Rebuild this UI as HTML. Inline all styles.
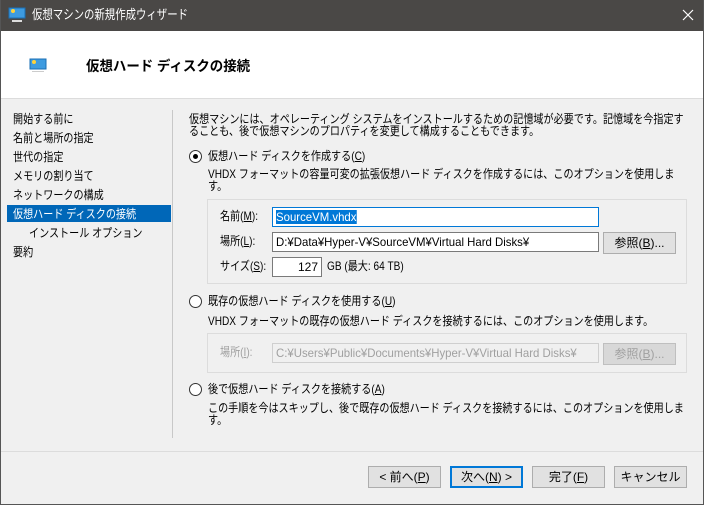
<!DOCTYPE html>
<html><head><meta charset="utf-8"><style>
*{margin:0;padding:0;box-sizing:border-box}
body{width:704px;height:505px;background:#f0f0f0;font-family:"Liberation Sans","Noto Sans CJK JP",sans-serif;font-size:12px;color:#000;position:relative;overflow:hidden}
.a{position:absolute;white-space:nowrap;line-height:14px;transform:scaleX(0.84);transform-origin:0 0}
.tb{position:absolute;left:0;top:0;width:704px;height:31px;background:#4a4846;color:#fff}
.hd{position:absolute;left:1px;top:31px;width:702px;height:68px;background:#fff;border-bottom:1px solid #dcdcdc}
.box{position:absolute;border:1px solid #dcdcdc}
.in{position:absolute;background:#fff;border:1px solid #7a7a7a;height:20px;padding-left:3px;line-height:18px;overflow:hidden;white-space:nowrap}
.in span.t{display:inline-block;transform:scaleX(0.95);transform-origin:0 0}
.btn{position:absolute;background:#e1e1e1;border:1px solid #adadad;height:22px;text-align:center;line-height:20px;white-space:nowrap}
.rad{position:absolute;width:13px;height:13px;border:1px solid #333;border-radius:50%;background:#fff}
u{text-decoration:underline}
.dis{color:#a0a0a0}
</style></head><body>
<div class="tb">
<svg style="position:absolute;left:8px;top:7px" width="18" height="16"><rect x="1" y="1" width="16" height="10" fill="#3d9be0" stroke="#1a6fb5"/><circle cx="5" cy="4" r="2" fill="#ffd23a"/><rect x="4" y="13" width="10" height="2" fill="#ddd"/></svg>
<div class="a" style="left:32px;top:8px;font-size:13px;color:#fff;transform:scaleX(0.8)">仮想マシンの新規作成ウィザード</div>
<svg style="position:absolute;left:682px;top:9px" width="12" height="12"><path d="M1 1L11 11M11 1L1 11" stroke="#fff" stroke-width="1.2"/></svg>
</div>
<div class="hd">
<svg style="position:absolute;left:28px;top:27px" width="18" height="16"><rect x="1" y="1" width="16" height="10" fill="#3d9be0" stroke="#1a6fb5"/><circle cx="5" cy="4" r="2" fill="#ffd23a"/><rect x="3" y="13" width="12" height="1" fill="#ccc"/></svg>
<div class="a" style="left:85px;top:28px;font-size:14px;font-weight:bold;transform:scaleX(0.96)">仮想ハード ディスクの接続</div>
</div>
<div style="position:absolute;left:0;top:0;width:704px;height:505px;border:1px solid #555;pointer-events:none;border-top:none"></div>
<div class="a" style="left:13px;top:112px">開始する前に</div>
<div class="a" style="left:13px;top:131px">名前と場所の指定</div>
<div class="a" style="left:13px;top:150px">世代の指定</div>
<div class="a" style="left:13px;top:169px">メモリの割り当て</div>
<div class="a" style="left:13px;top:188px">ネットワークの構成</div>
<div style="position:absolute;left:7px;top:205px;width:164px;height:17px;background:#0067b8"></div>
<div class="a" style="left:13px;top:207px;color:#fff">仮想ハード ディスクの接続</div>
<div class="a" style="left:29px;top:226px">インストール オプション</div>
<div class="a" style="left:13px;top:245px">要約</div>
<div style="position:absolute;left:172px;top:110px;width:1px;height:328px;background:#c8c8c8"></div>
<div class="a" style="left:189px;top:113px;line-height:12px">仮想マシンには、オペレーティング システムをインストールするための記憶域が必要です。記憶域を今指定す<br>ることも、後で仮想マシンのプロパティを変更して構成することもできます。</div>
<div class="rad" style="left:189px;top:150px"><div style="position:absolute;left:3px;top:3px;width:5px;height:5px;border-radius:50%;background:#000"></div></div>
<div class="a" style="left:208px;top:149px">仮想ハード ディスクを作成する(<u>C</u>)</div>
<div class="a" style="left:208px;top:168px;line-height:12px">VHDX フォーマットの容量可変の拡張仮想ハード ディスクを作成するには、このオプションを使用しま<br>す。</div>
<div class="box" style="left:207px;top:199px;width:480px;height:85px"></div>
<div class="a" style="left:220px;top:209px">名前(<u>M</u>):</div>
<div class="in" style="left:272px;top:207px;width:327px;border-color:#0078d7"><span class="t"><span style="background:#0078d7;color:#fff">SourceVM.vhdx</span></span></div>
<div class="a" style="left:220px;top:234px">場所(<u>L</u>):</div>
<div class="in" style="left:272px;top:232px;width:327px"><span class="t">D:¥Data¥Hyper-V¥SourceVM¥Virtual Hard Disks¥</span></div>
<div class="btn" style="left:603px;top:232px;width:73px">参照(<u>B</u>)...</div>
<div class="a" style="left:220px;top:259px">サイズ(<u>S</u>):</div>
<div class="in" style="left:272px;top:257px;width:50px;text-align:right;padding-right:3px">127</div>
<div class="a" style="left:327px;top:259px">GB (最大: 64 TB)</div>
<div class="rad" style="left:189px;top:295px"></div>
<div class="a" style="left:208px;top:294px">既存の仮想ハード ディスクを使用する(<u>U</u>)</div>
<div class="a" style="left:208px;top:314px">VHDX フォーマットの既存の仮想ハード ディスクを接続するには、このオプションを使用します。</div>
<div class="box" style="left:207px;top:333px;width:480px;height:40px"></div>
<div class="a dis" style="left:220px;top:345px">場所(<u>I</u>):</div>
<div class="in dis" style="left:272px;top:343px;width:327px;background:#f0f0f0;border-color:#cfcfcf"><span class="t">C:¥Users¥Public¥Documents¥Hyper-V¥Virtual Hard Disks¥</span></div>
<div class="btn dis" style="left:603px;top:343px;width:73px;background:#d8d8d8;border-color:#bfbfbf">参照(<u>B</u>)...</div>
<div class="rad" style="left:189px;top:383px"></div>
<div class="a" style="left:208px;top:382px">後で仮想ハード ディスクを接続する(<u>A</u>)</div>
<div class="a" style="left:208px;top:402px;line-height:12px">この手順を今はスキップし、後で既存の仮想ハード ディスクを接続するには、このオプションを使用しま<br>す。</div>
<div style="position:absolute;left:1px;top:451px;width:702px;height:1px;background:#dcdcdc"></div>
<div class="btn" style="left:368px;top:466px;width:73px">&lt; 前へ(<u>P</u>)</div>
<div class="btn" style="left:450px;top:466px;width:73px;border:2px solid #0078d7;line-height:18px">次へ(<u>N</u>) &gt;</div>
<div class="btn" style="left:532px;top:466px;width:73px">完了(<u>F</u>)</div>
<div class="btn" style="left:614px;top:466px;width:73px">キャンセル</div>
</body></html>
